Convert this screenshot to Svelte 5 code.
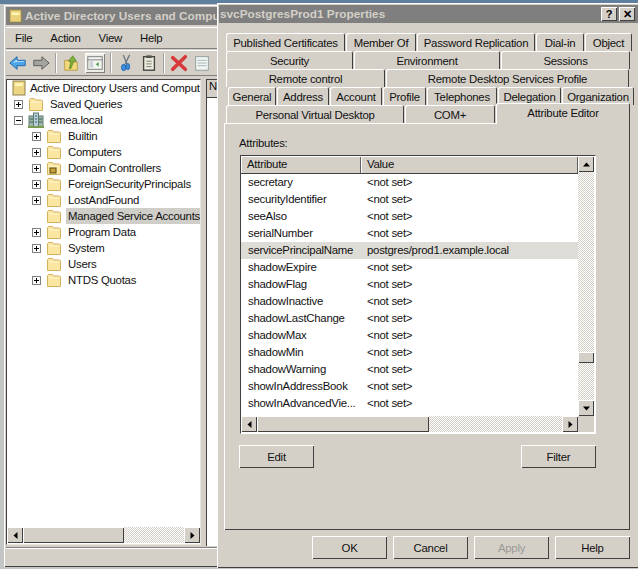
<script>
  const tree = [
    { name: 'Saved Queries', depth: 0, box: '+', icon: 'folder' },
    { name: 'emea.local', depth: 0, box: '-', icon: 'domain' },
    { name: 'Builtin', depth: 1, box: '+', icon: 'folder' },
    { name: 'Computers', depth: 1, box: '+', icon: 'folder' },
    { name: 'Domain Controllers', depth: 1, box: '+', icon: 'ou' },
    { name: 'ForeignSecurityPrincipals', depth: 1, box: '+', icon: 'folder' },
    { name: 'LostAndFound', depth: 1, box: '+', icon: 'folder' },
    { name: 'Managed Service Accounts', depth: 1, box: '', icon: 'folder', selected: true },
    { name: 'Program Data', depth: 1, box: '+', icon: 'folder' },
    { name: 'System', depth: 1, box: '+', icon: 'folder' },
    { name: 'Users', depth: 1, box: '', icon: 'folder' },
    { name: 'NTDS Quotas', depth: 1, box: '+', icon: 'folder' }
  ];

  // widths are taken from the tab strip, the rows are not equally divided
  const tabRows = [
    [['Published Certificates', 119], ['Member Of', 70], ['Password Replication', 118], ['Dial-in', 48], ['Object', 47]],
    [['Security', 127], ['Environment', 146], ['Sessions', 129]],
    [['Remote control', 159], ['Remote Desktop Services Profile', 243]],
    [['General', 48], ['Address', 52], ['Account', 52], ['Profile', 43], ['Telephones', 70], ['Delegation', 63], ['Organization', 72]]
  ];

  const attrs = [
    ['secretary', '<not set>'],
    ['securityIdentifier', '<not set>'],
    ['seeAlso', '<not set>'],
    ['serialNumber', '<not set>'],
    ['servicePrincipalName', 'postgres/prod1.example.local', true],
    ['shadowExpire', '<not set>'],
    ['shadowFlag', '<not set>'],
    ['shadowInactive', '<not set>'],
    ['shadowLastChange', '<not set>'],
    ['shadowMax', '<not set>'],
    ['shadowMin', '<not set>'],
    ['shadowWarning', '<not set>'],
    ['showInAddressBook', '<not set>'],
    ['showInAdvancedVie...', '<not set>'],
    ['sIDHistory', '<not set>']
  ];
</script>

{#snippet folder(kind)}
  <svg class="ico" viewBox="0 0 16 16" width="16" height="16">
    {#if kind === 'domain'}
      <rect x="1" y="4" width="5" height="11" fill="#9db9a8" stroke="#5d7a70" />
      <rect x="10" y="4" width="5" height="11" fill="#9db9a8" stroke="#5d7a70" />
      <rect x="5.500" y="1" width="5" height="14" fill="#b9cfe0" stroke="#5d7a70" />
      <path d="M2 7h3M2 10h3M11 7h3M11 10h3M7 4h2M7 7h2M7 10h2" stroke="#3c5a50" />
      <path d="M0 15h16" stroke="#7a9a50" stroke-width="2" />
    {:else}
      <path d="M1.500 14.500V3.500l1-1h4l1 1.500h6l1 1v9.500z" fill="#fbe6a2" stroke="#d2b25e" />
      <path d="M2.500 5.500h11v1h-11z" fill="#fff6d0" />
      {#if kind === 'ou'}
        <rect x="4" y="8" width="6" height="5" fill="#c9a033" stroke="#5a4a18" />
      {/if}
    {/if}
  </svg>
{/snippet}

{#snippet arrow(dir)}
  <span class="sbtn">
    <svg viewBox="0 0 7 7" width="7" height="7">
      {#if dir === 'up'}<path d="M0 5.500 3.500 1.500 7 5.500z" />{/if}
      {#if dir === 'down'}<path d="M0 1.500 3.500 5.500 7 1.500z" />{/if}
      {#if dir === 'left'}<path d="M5.500 0 1.500 3.500 5.500 7z" />{/if}
      {#if dir === 'right'}<path d="M1.500 0 5.500 3.500 1.500 7z" />{/if}
    </svg>
  </span>
{/snippet}

<div class="desktop">
  <!-- console behind the dialog -->
  <section class="window aduc">
    <header class="title">
      <svg class="ico" viewBox="0 0 16 16" width="14" height="16">
        <rect x="1" y="1" width="13" height="14" fill="#e9d27a" stroke="#8f7f4a" />
        <rect x="3" y="4" width="9" height="3" fill="#fff3b5" />
      </svg>
      <span>Active Directory Users and Computers</span>
    </header>
    <nav class="menu">
      <span>File</span><span>Action</span><span>View</span><span>Help</span>
    </nav>
    <div class="toolbar">
      <svg class="tool" viewBox="0 0 20 20">
        <path d="M1 10 9 3v4h9v6H9v4z" fill="#4aa6e8" stroke="#1f62a8" />
        <path d="M4 10 9 6v2h8v1H8z" fill="#bfe6ff" />
      </svg>
      <svg class="tool" viewBox="0 0 20 20">
        <path d="M19 10 11 3v4H2v6h9v4z" fill="#a4a4a0" stroke="#55554f" />
      </svg>
      <i class="sep"></i>
      <svg class="tool" viewBox="0 0 20 20">
        <path d="M3 18V7h5l1 2h8v9z" fill="#f4d97c" stroke="#b59a45" />
        <path d="M8 16 10 8H7l5-6 4 6h-3l-3 8z" fill="#7fb23a" stroke="#4e7a1e" stroke-width=".7" />
      </svg>
      <span class="pressed">
        <svg class="tool" viewBox="0 0 20 20">
          <rect x="2" y="3" width="16" height="14" fill="#f4f4ee" stroke="#74787c" />
          <path d="M2 6.500h16" stroke="#74787c" />
          <rect x="4" y="8" width="4" height="7" fill="#c8d0d8" />
          <path d="M14 9v5l-3-2.500z" fill="#3a9a4a" />
        </svg>
      </span>
      <i class="sep"></i>
      <svg class="tool" viewBox="0 0 20 20">
        <path d="M14 1 9 11M7 1l4 10" stroke="#6b7680" stroke-width="1.400" fill="none" />
        <ellipse cx="7.500" cy="15" rx="2.500" ry="3.500" fill="#3f8fe0" stroke="#1f62a8" />
        <ellipse cx="12" cy="14" rx="2" ry="3.500" fill="#3f8fe0" stroke="#1f62a8" />
      </svg>
      <svg class="tool" viewBox="0 0 20 20">
        <rect x="4" y="3" width="12" height="15" fill="#ecebdd" stroke="#45453f" stroke-width="1.500" />
        <rect x="7" y="1.500" width="6" height="3" fill="#55554f" />
        <path d="M7 8h6M7 11h6M7 14h6" stroke="#77776f" />
      </svg>
      <i class="sep"></i>
      <svg class="tool" viewBox="0 0 20 20">
        <path d="M3 4 17 17M17 3 3 17" stroke="#d8393a" stroke-width="4" stroke-linecap="round" />
      </svg>
      <svg class="tool" viewBox="0 0 20 20">
        <rect x="3" y="3" width="14" height="15" fill="#f2f5f2" stroke="#8a9a9a" />
        <path d="M5 7h10M5 10h10M5 13h10" stroke="#9ab0b0" />
      </svg>
    </div>
    <div class="panes">
      <div class="treebox">
        <div class="tree">
          <div class="node rootnode">
            <svg class="ico" viewBox="0 0 16 16" width="16" height="16">
              <rect x="2" y="1" width="12" height="14" fill="#ecd684" stroke="#8f7f4a" />
              <rect x="4" y="3" width="8" height="3" fill="#fff3b5" />
            </svg>
            <span class="label">Active Directory Users and Computers</span>
          </div>
          {#each tree as n}
            <div class="node" class:child={n.depth === 1}>
              <span class="boxslot">
                {#if n.box}
                  <span class="box">
                    <i class="dash"></i>
                    {#if n.box === '+'}<i class="bar"></i>{/if}
                  </span>
                {/if}
              </span>
              {@render folder(n.icon)}
              <span class="label" class:sel={n.selected}>{n.name}</span>
            </div>
          {/each}
        </div>
        <div class="hscroll treeh">
          {@render arrow('left')}
          <span class="sbtn hthumb"></span>
          <span class="track"></span>
          {@render arrow('right')}
        </div>
      </div>
      <div class="listpane"><span class="listhead">N</span></div>
    </div>
    <footer class="status"></footer>
  </section>

  <section class="window dialog">
    <header class="title dlgtitle">
      <span>svcPostgresProd1 Properties</span>
      <span class="capbtns">
        <b class="capbtn">?</b>
        <b class="capbtn">✕</b>
      </span>
    </header>

    <div class="tabs">
      {#each tabRows as row, i}
        <div class="tabrow" class:inset={i === 3}>
          {#each row as [label, w]}
            <span class="tab" style="width: {w}px">{label}</span>
          {/each}
        </div>
      {/each}
      <div class="tabrow lastrow">
        <span class="tab" style="width: 178px">Personal Virtual Desktop</span>
        <span class="tab" style="width: 90px">COM+</span>
        <span class="tab active">Attribute Editor</span>
      </div>
    </div>

    <div class="page">
      <div class="fieldlabel">Attributes:</div>
      <div class="listbox">
        <div class="listmain">
          <div class="columns">
            <span class="colhead c1">Attribute</span>
            <span class="colhead c2">Value</span>
          </div>
          <div class="rows">
            {#each attrs as [key, val, hi]}
              <div class="row" class:hi>
                <span class="c1">{key}</span>
                <span class="c2">{val}</span>
              </div>
            {/each}
          </div>
          <div class="hscroll">
            {@render arrow('left')}
            <span class="sbtn listthumb"></span>
            <span class="track"></span>
            {@render arrow('right')}
          </div>
        </div>
        <div class="vscroll">
          {@render arrow('up')}
          <span class="track vtop"></span>
          <span class="sbtn vthumb"></span>
          <span class="track"></span>
          {@render arrow('down')}
          <span class="corner"></span>
        </div>
      </div>
      <div class="pagebtns">
        <button>Edit</button>
        <button>Filter</button>
      </div>
    </div>

    <div class="actions">
      <button>OK</button>
      <button>Cancel</button>
      <button class="off">Apply</button>
      <button>Help</button>
    </div>
  </section>
</div>

<style>
  :global(body) {
    background: #d4d0c8;
  }
  .desktop {
    position: relative;
    width: 638px;
    height: 569px;
    overflow: hidden;
    background: linear-gradient(#5f7f9f 0 4px, #c4c6c6 4px);
    font: 11.4px "Liberation Sans", Arial, sans-serif;
    letter-spacing: -0.25px;
    color: #111;
  }
  .window {
    position: absolute;
    display: flex;
    flex-direction: column;
    box-sizing: border-box;
    background: #d4d0c8;
    box-shadow: inset 1px 1px 0 #fff, inset -1px -1px 0 #404040;
  }
  .aduc {
    left: 4px;
    top: 5px;
    width: 214px;
    height: 562px;
    padding: 2px 0 0 2px;
  }
  .dialog {
    left: 217px;
    top: 3px;
    width: 423px;
    height: 565px;
    padding: 2px 0 0 2px;
  }
  .title {
    display: flex;
    align-items: center;
    gap: 2px;
    height: 18px;
    flex: none;
    padding-left: 3px;
    background: #7f7f7f;
    color: #d4d0c8;
    font-weight: bold;
    font-size: 11.8px;
    letter-spacing: 0;
    white-space: nowrap;
    overflow: hidden;
  }
  .menu {
    display: flex;
    gap: 18px;
    align-items: center;
    height: 20px;
    margin-top: 2px;
    padding-left: 9px;
    border-top: 1px solid #fff;
    border-bottom: 1px solid #808080;
    flex: none;
  }
  .toolbar {
    display: flex;
    align-items: center;
    height: 24px;
    margin-top: 1px;
    padding-left: 3px;
    gap: 5px;
    border-top: 1px solid #fff;
    border-bottom: 1px solid #808080;
    flex: none;
  }
  .tool {
    width: 18px;
    height: 18px;
    display: block;
    flex: none;
  }
  .sep {
    width: 1px;
    height: 20px;
    background: #a0a0a0;
    box-shadow: 1px 0 0 #fff;
    margin-right: 1px;
    flex: none;
  }
  .pressed {
    padding: 1px;
    background: #eeece6;
    box-shadow: inset 1px 1px 0 #fff, inset -1px -1px 0 #808080;
  }
  .panes {
    display: flex;
    flex: 1;
    min-height: 0;
    margin-top: 3px;
    gap: 5px;
  }
  .treebox {
    display: flex;
    flex-direction: column;
    width: 195px;
    box-sizing: border-box;
    background: #fff;
    border: 1px solid #404040;
    border-right-color: #e8e6e0;
    border-bottom-color: #e8e6e0;
    margin-bottom: 3px;
  }
  .tree {
    flex: 1;
    overflow: hidden;
    white-space: nowrap;
  }
  .node {
    display: flex;
    align-items: center;
    height: 16px;
    padding-left: 7px;
  }
  .rootnode {
    padding-left: 4px;
  }
  .rootnode .label {
    margin-left: 1px;
  }
  .child {
    padding-left: 25px;
  }
  .boxslot {
    width: 14px;
    flex: none;
  }
  .box {
    position: relative;
    display: block;
    width: 9px;
    height: 9px;
    box-sizing: border-box;
    border: 1px solid #808080;
    background: #fff;
  }
  .dash, .bar {
    position: absolute;
    background: #000;
  }
  .dash {
    left: 1px;
    top: 3px;
    width: 5px;
    height: 1px;
  }
  .bar {
    left: 3px;
    top: 1px;
    width: 1px;
    height: 5px;
  }
  .ico {
    flex: none;
    display: block;
  }
  .label {
    margin-left: 4px;
    padding: 0 2px;
    line-height: 16px;
  }
  .sel {
    background: #d0cec8;
  }
  .hscroll {
    display: flex;
    height: 16px;
    flex: none;
  }
  .treeh {
    margin-bottom: 1px;
  }
  .sbtn {
    display: flex;
    align-items: center;
    justify-content: center;
    width: 16px;
    height: 16px;
    box-sizing: border-box;
    flex: none;
    background: #d4d0c8;
    box-shadow: inset 1px 1px 0 #fff, inset -1px -1px 0 #404040;
  }
  .sbtn svg {
    display: block;
  }
  .hthumb {
    width: 101px;
  }
  .listthumb {
    width: 172px;
  }
  .track {
    flex: 1;
    background: repeating-conic-gradient(#fff 0 25%, #d4d0c8 0 50%) 0 0 / 2px 2px;
  }
  .listpane {
    flex: 1;
    background: #fff;
    border: 1px solid #404040;
    border-bottom: none;
    margin-bottom: 2px;
    overflow: hidden;
  }
  .listhead {
    display: block;
    height: 17px;
    padding-left: 2px;
    background: #d4d0c8;
    border-bottom: 1px solid #404040;
  }
  .status {
    height: 17px;
    flex: none;
    margin: 0 0 1px;
    border-top: 1px solid #fff;
    box-shadow: 0 -1px 0 #808080;
  }

  .dlgtitle {
    justify-content: space-between;
    padding: 0 3px 0 1px;
    box-sizing: border-box;
    width: 419px;
  }
  .capbtns {
    display: flex;
    gap: 2px;
  }
  .capbtn {
    width: 16px;
    height: 14px;
    display: flex;
    align-items: center;
    justify-content: center;
    background: #d4d0c8;
    color: #000;
    font-size: 11px;
    box-shadow: inset 1px 1px 0 #fff, inset -1px -1px 0 #404040;
  }
  .tabs {
    display: flex;
    flex-direction: column;
    margin-top: 10px;
    padding-left: 7px;
    height: 90px;
    flex: none;
  }
  .tabrow {
    display: flex;
    gap: 1px;
    height: 18px;
    flex: none;
  }
  .inset {
    padding-left: 2px;
  }
  .tab {
    box-sizing: border-box;
    height: 18px;
    line-height: 20px;
    text-align: center;
    white-space: nowrap;
    background: #d4d0c8;
    border-radius: 2px 2px 0 0;
    box-shadow: inset 1px 1px 0 #fff, inset -1px 0 0 #404040;
  }
  .lastrow {
    position: relative;
    z-index: 1;
  }
  .active {
    width: 134px;
    height: 21px;
    line-height: 20px;
    margin-top: -2px;
  }
  .page {
    display: flex;
    flex-direction: column;
    box-sizing: border-box;
    width: 406px;
    height: 407px;
    margin-left: 5px;
    flex: none;
    padding: 13px 34px 0 15px;
    box-shadow: inset 1px 1px 0 #fff, inset -1px -1px 0 #404040;
  }
  .fieldlabel {
    height: 19px;
    line-height: 14px;
    flex: none;
  }
  .listbox {
    display: flex;
    height: 279px;
    box-sizing: border-box;
    margin-left: 1px;
    padding: 0 1px 1px 0;
    flex: none;
    border: 1px solid #404040;
    border-right-color: #fff;
    border-bottom-color: #fff;
    background: #fff;
  }
  .listmain {
    display: flex;
    flex-direction: column;
    flex: 1;
    min-width: 0;
  }
  .columns {
    display: flex;
    height: 18px;
    flex: none;
    box-sizing: border-box;
    border-bottom: 1px solid #404040;
    background: #d4d0c8;
  }
  .colhead {
    box-sizing: border-box;
    line-height: 17px;
    padding-left: 6px;
    box-shadow: inset 1px 1px 0 #fff, inset -1px 0 0 #606060;
  }
  .c1 {
    width: 120px;
    flex: none;
  }
  .c2 {
    flex: 1;
  }
  .rows {
    flex: 1;
    min-height: 0;
    overflow: hidden;
  }
  .row {
    display: flex;
    height: 17px;
    line-height: 17px;
    white-space: nowrap;
  }
  .row .c1 {
    padding-left: 7px;
    box-sizing: border-box;
  }
  .row .c2 {
    padding-left: 6px;
  }
  .hi {
    background: #dedcd6;
  }
  .vscroll {
    display: flex;
    flex-direction: column;
    width: 16px;
    flex: none;
  }
  .vtop {
    flex: none;
    height: 180px;
  }
  .vthumb {
    height: 11px;
  }
  .corner {
    height: 16px;
    flex: none;
    background: #d4d0c8;
  }
  .pagebtns {
    display: flex;
    justify-content: space-between;
    margin-top: 11px;
    flex: none;
  }
  button {
    width: 75px;
    height: 23px;
    padding: 0;
    border: 0;
    font: inherit;
    letter-spacing: inherit;
    color: inherit;
    background: #d4d0c8;
    box-shadow: inset 1px 1px 0 #fff, inset -1px -1px 0 #404040;
  }
  .actions {
    display: flex;
    gap: 6px;
    margin-top: 6px;
    padding-left: 93px;
    flex: none;
  }
  .off {
    color: #9a9a94;
  }
</style>
